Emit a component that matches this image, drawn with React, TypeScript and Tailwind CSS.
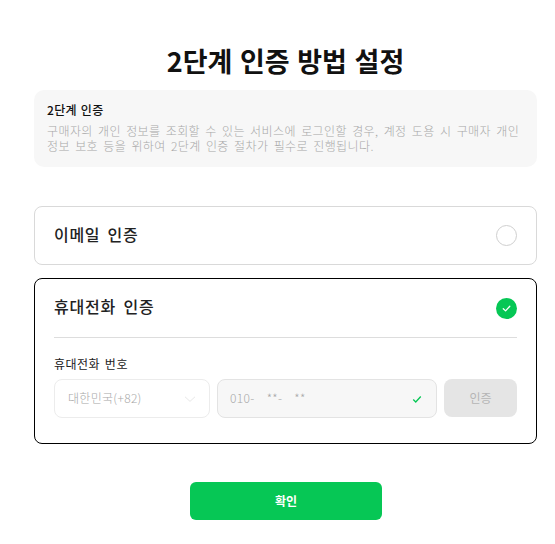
import React from "react";

const font = { fontFamily: '"Noto Sans CJK KR", "Noto Sans", sans-serif' };

export default function App() {
  return (
    <div className="w-[555px] h-[544px] bg-white overflow-hidden pl-[34px] pt-[41px]" style={font}>
      <div className="w-[503px] flex flex-col">
        <h1 className="text-[27px] leading-[40px] font-bold text-center text-[#111111] [word-spacing:1.5px]">2단계 인증 방법 설정</h1>
        <div className="mt-[9px] h-[77px] rounded-[10px] bg-[#f7f7f7] pl-[13px] pr-[10px] pt-[12px]">
          <p className="text-[12px] leading-[16px] font-medium text-[#111111] tracking-[0.3px] [word-spacing:1px]">2단계 인증</p>
          <p className="mt-[5px] text-[12px] leading-[15px] font-light text-[#a8a8a8] tracking-[0.4px] [word-spacing:2.2px] whitespace-nowrap">
            구매자의 개인 정보를 조회할 수 있는 서비스에 로그인할 경우, 계정 도용 시 구매자 개인<br />
            정보 보호 등을 위하여 2단계 인증 절차가 필수로 진행됩니다.
          </p>
        </div>

        <div className="mt-[39px] h-[59px] rounded-[8px] border border-[#d9d9d9] flex items-center justify-between pl-[19px] pr-[19px]">
          <span className="text-[16px] font-medium text-[#222222] tracking-[0.7px] [word-spacing:3px] pb-[4px]">이메일 인증</span>
          <span className="w-[21px] h-[21px] rounded-full border border-[#cfcfcf]" />
        </div>

        <div className="mt-[13px] h-[166px] rounded-[8px] border border-black px-[19px] flex flex-col">
          <div className="h-[59px] flex items-center justify-between border-b border-[#dddddd] shrink-0">
            <span className="text-[16px] font-medium text-[#222222] tracking-[0.8px] [word-spacing:3px] pb-[4px]">휴대전화 인증</span>
            <span className="w-[21px] h-[21px] rounded-full bg-[#06c755] flex items-center justify-center">
              <svg width="11" height="11" viewBox="0 0 12 12" fill="none">
                <path d="M2.5 6.2 5 8.6 9.6 3.6" stroke="#fff" strokeWidth="1.4" strokeLinecap="round" strokeLinejoin="round" />
              </svg>
            </span>
          </div>
          <label className="mt-[17px] text-[12px] leading-[18px] text-[#222222] tracking-[0.5px] [word-spacing:1.5px]">휴대전화 번호</label>
          <div className="mt-[6px] flex gap-[7px] items-start">
            <div className="w-[156px] h-[39px] rounded-[8px] border border-[#ececec] bg-white flex items-center justify-between pl-[13px] pr-[13px]">
              <span className="text-[12px] font-light text-[#a8a8a8] tracking-[0.3px] pb-[2px]">대한민국(+82)</span>
              <svg width="12" height="12" viewBox="0 0 12 12" fill="none">
                <path d="M1 3.8 6 8.4 11 3.8" stroke="#e8e8e8" strokeWidth="1" />
              </svg>
            </div>
            <div className="w-[220px] h-[39px] rounded-[8px] border border-[#e3e3e3] bg-[#f7f7f7] flex items-center justify-between pl-[12px] pr-[14px]">
              <span className="text-[12px] font-light text-[#a8a8a8] whitespace-pre tracking-[0.35px] pb-[2px]">010-    **-    **</span>
              <svg width="10" height="10" viewBox="0 0 12 12" fill="none">
                <path d="M1.5 6.5 4.5 9.5 10.5 3" stroke="#06c755" strokeWidth="1.6" />
              </svg>
            </div>
            <button className="w-[73px] h-[38px] rounded-[8px] bg-[#e5e5e5] text-[12px] text-[#b5b5b5] pb-[1px]">인증</button>
          </div>
        </div>

        <button className="mt-[38px] self-center ml-px w-[192px] h-[38px] rounded-[6px] bg-[#06c755] text-white text-[12px] font-bold">확인</button>
      </div>
    </div>
  );
}
